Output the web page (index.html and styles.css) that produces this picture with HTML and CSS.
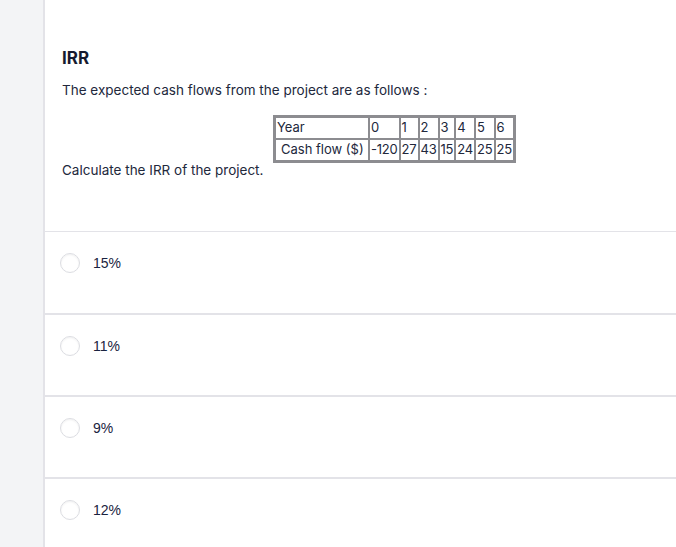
FILE: index.html
```html
<!DOCTYPE html>
<html>
<head>
<meta charset="utf-8">
<link rel="stylesheet" href="styles.css">
</head>
<body>
<div class="page">
  <aside class="rail"></aside>
  <main class="main">
    <section class="question">
      <h1 class="title">IRR</h1>
      <p class="text">The expected cash flows from the project are as follows :</p>
      <div class="table-wrap">
        <table class="cf">
          <tr><td class="lbl">Year</td><td>0</td><td>1</td><td>2</td><td>3</td><td>4</td><td>5</td><td>6</td></tr>
          <tr><td class="lbl ind">Cash flow ($)</td><td>-120</td><td>27</td><td>43</td><td>15</td><td>24</td><td>25</td><td>25</td></tr>
        </table>
      </div>
      <p class="text calc">Calculate the IRR of the project.</p>
    </section>
    <ul class="options">
      <li class="option first"><span class="radio"></span><span class="opt-text">15%</span></li>
      <li class="option"><span class="radio"></span><span class="opt-text">11%</span></li>
      <li class="option"><span class="radio"></span><span class="opt-text">9%</span></li>
      <li class="option"><span class="radio"></span><span class="opt-text">12%</span></li>
    </ul>
  </main>
</div>
</body>
</html>
```
FILE: styles.css
```css
html, body {
  margin: 0;
  padding: 0;
  background: #ffffff;
}
body {
  font-family: Inter, "Noto Sans", sans-serif;
  color: #1c2236;
  width: 676px;
  height: 547px;
  overflow: hidden;
}
.page {
  display: flex;
  height: 547px;
}
.rail {
  width: 43px;
  flex: none;
  background: #f3f4f6;
  border-right: 2px solid #e3e3e8;
}
.main {
  flex: 1;
  display: flex;
  flex-direction: column;
  overflow: hidden;
}
.question {
  flex: none;
  box-sizing: border-box;
  padding: 47px 18px 0 17px;
  height: 232px;
  border-bottom: 1px solid #e3e3e8;
}
.title {
  margin: 0;
  font-size: 17px;
  line-height: 22px;
  font-weight: 700;
  color: #161b30;
}
.text {
  margin: 0;
  font-size: 13.5px;
  line-height: 20px;
  color: #22283c;
}
.title + .text {
  margin-top: 11px;
}
.table-wrap {
  margin-top: 15px;
  padding-left: 211px;
}
.cf {
  border-collapse: separate;
  border-spacing: 0;
  border: 2px solid #8c8c90;
  font-size: 13px;
  line-height: 19px;
  color: #22283c;
}
.cf td {
  border: 1px solid #8c8c90;
  padding: 0 1px 1px 1px;
  letter-spacing: -0.2px;
}
.cf td.lbl {
  width: 86px;
  padding-left: 1px;
  letter-spacing: 0;
}
.cf td.ind {
  padding-left: 5px;
}
.calc {
  margin-top: -3px;
}
.options {
  flex: none;
  list-style: none;
  margin: 0;
  padding: 0;
}
.option {
  box-sizing: border-box;
  height: 82px;
  border-bottom: 2px solid #e3e3e8;
  display: flex;
  align-items: center;
  padding: 0 0 18px 15px;
}
.option.first {
  height: 83px;
  padding-bottom: 20px;
}
.radio {
  width: 18px;
  height: 18px;
  border-radius: 50%;
  border: 1px solid #dcdde2;
  box-shadow: inset 0 1px 2px rgba(0,0,0,0.06);
  background: #fff;
  flex: none;
}
.opt-text {
  margin-left: 13px;
  font-family: "Liberation Sans", Arial, sans-serif;
  font-size: 14px;
  color: #1a2340;
}
```
